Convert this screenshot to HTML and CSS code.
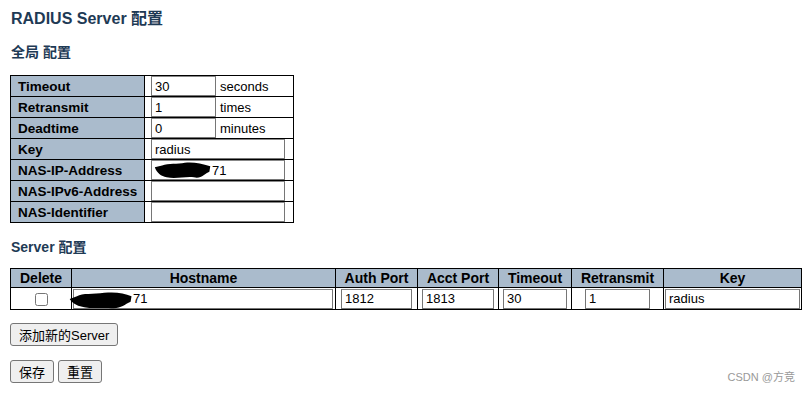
FILE: index.html
```html
<!DOCTYPE html>
<html>
<head>
  <link rel="stylesheet" href="styles.css">
</head>
<body>
  <h1 class="title">RADIUS Server 配置</h1>
  <h2 class="subtitle">全局 配置</h2>
  <table class="config global">
    <tr>
      <th class="label">Timeout</th>
      <td class="value"><input type="text" class="input short" value="30"><span class="unit">seconds</span></td>
    </tr>
    <tr>
      <th class="label">Retransmit</th>
      <td class="value"><input type="text" class="input short" value="1"><span class="unit">times</span></td>
    </tr>
    <tr>
      <th class="label">Deadtime</th>
      <td class="value"><input type="text" class="input short" value="0"><span class="unit">minutes</span></td>
    </tr>
    <tr>
      <th class="label">Key</th>
      <td class="value"><input type="text" class="input long" value="radius"></td>
    </tr>
    <tr>
      <th class="label">NAS-IP-Address</th>
      <td class="value">
        <span class="masked">
          <input type="text" class="input long ip" value="71">
          <svg class="blob blob-ip" viewBox="0 0 64 22"><path d="M1 8 L9 6 C16 3 26 5 34 3 C44 2 52 4 62 7 L61 13 C56 15 52 21 44 19 C34 18 24 21 14 19 C8 18 3 14 1 8 Z" fill="#000"/></svg>
        </span>
      </td>
    </tr>
    <tr>
      <th class="label">NAS-IPv6-Address</th>
      <td class="value"><input type="text" class="input long" value=""></td>
    </tr>
    <tr>
      <th class="label">NAS-Identifier</th>
      <td class="value"><input type="text" class="input long" value=""></td>
    </tr>
  </table>

  <h2 class="subtitle server-title">Server 配置</h2>
  <table class="config servers">
    <tr>
      <th class="col-delete">Delete</th>
      <th class="col-host">Hostname</th>
      <th class="col-auth">Auth Port</th>
      <th class="col-acct">Acct Port</th>
      <th class="col-timeout">Timeout</th>
      <th class="col-retrans">Retransmit</th>
      <th class="col-key">Key</th>
    </tr>
    <tr>
      <td class="cell-center"><input type="checkbox" class="check"></td>
      <td class="cell-left">
        <span class="masked">
          <input type="text" class="input host" value="71">
          <svg class="blob blob-host" viewBox="0 0 70 22"><path d="M0 10 L8 7 C14 3 26 5 38 3 C50 2 60 3 68 7 L67 13 C60 16 56 21 46 20 C36 19 26 21 16 19 C10 18 4 16 0 10 Z" fill="#000"/></svg>
        </span>
      </td>
      <td class="cell-center"><input type="text" class="input auth" value="1812"></td>
      <td class="cell-center"><input type="text" class="input acct" value="1813"></td>
      <td class="cell-center"><input type="text" class="input tmo" value="30"></td>
      <td class="cell-center"><input type="text" class="input retr" value="1"></td>
      <td class="cell-left"><input type="text" class="input skey" value="radius"></td>
    </tr>
  </table>

  <div class="actions">
    <button class="btn">添加新的Server</button>
  </div>
  <div class="actions save-row">
    <button class="btn">保存</button>
    <button class="btn">重置</button>
  </div>

  <div class="watermark">CSDN @方竞</div>
</body>
</html>
```

FILE: styles.css
```css
body {
  margin: 0;
  padding: 0 10px;
  font-family: 'Liberation Sans', Arial, 'Noto Sans CJK SC', sans-serif;
  font-size: 13px;
  color: #000;
  background-color: #fff;
  width: 811px;
  height: 393px;
  box-sizing: border-box;
  position: relative;
  overflow: hidden;
}
.title {
  font-size: 16px;
  font-weight: bold;
  line-height: 20px;
  margin: 9px 0 0 1px;
  color: #1e3a55;
}
.subtitle {
  font-size: 14px;
  font-weight: bold;
  line-height: 18px;
  margin: 14px 0 0 1px;
  color: #1e3a55;
}
.server-title {
  margin-top: 15px;
}
.config {
  border-collapse: collapse;
  border: 1px solid #000;
}
.config th, .config td {
  border: 1px solid #000;
  padding: 0;
}
.global {
  margin-top: 14px;
  width: 284px;
}
.global .label {
  width: 126px;
  height: 20px;
  background-color: #aabbcc;
  text-align: left;
  padding-left: 7px;
  font-weight: bold;
  font-size: 13.5px;
}
.global .value {
  height: 20px;
  padding-left: 6px;
  white-space: nowrap;
}
.input {
  font-family: 'Liberation Sans', Arial, sans-serif;
  font-size: 13px;
  height: 20px;
  box-sizing: border-box;
  border: 1px solid #767676;
  border-top-color: #888;
  padding: 0 3px;
  margin: 0;
  vertical-align: middle;
  background: #fff;
  color: #000;
}
.short {
  width: 65px;
}
.long {
  width: 134px;
}
.unit {
  padding-left: 4px;
  vertical-align: middle;
}
.masked {
  position: relative;
  display: inline-block;
  vertical-align: middle;
}
.masked .input {
  vertical-align: top;
}
.ip {
  padding-left: 60px;
}
.blob {
  position: absolute;
  top: 0;
  height: 20px;
}
.blob-ip {
  left: 1px;
  width: 62px;
}
.blob-host {
  left: -5px;
  top: 1px;
  width: 67px;
}
.server-title + .servers {
  margin-top: 12px;
}
.servers {
  width: 792px;
}
.servers th {
  background-color: #aabbcc;
  font-weight: bold;
  font-size: 14px;
  text-align: center;
  height: 18px;
  line-height: 16px;
}
.servers td {
  height: 21px;
}
.col-delete { width: 60px; }
.col-host { width: 263px; }
.col-auth { width: 81px; }
.col-acct { width: 80px; }
.col-timeout { width: 72px; }
.col-retrans { width: 91px; }
.cell-center {
  text-align: center;
}
.cell-left {
  text-align: left;
  padding-left: 1px !important;
}
.check {
  width: 13px;
  height: 13px;
  margin: 0;
  vertical-align: middle;
}
.host {
  width: 260px;
  padding-left: 59px;
}
.auth { width: 71px; }
.acct { width: 72px; }
.tmo { width: 64px; }
.retr { width: 65px; }
.skey { width: 135px; }
.actions {
  display: flex;
  gap: 4px;
  margin-top: 13px;
}
.save-row {
  margin-top: 14px;
}
.btn {
  font-family: 'Liberation Sans', Arial, 'Noto Sans CJK SC', sans-serif;
  font-size: 13px;
  height: 23px;
  padding: 0 8px;
  background-color: #efefef;
  border: 1px solid #767676;
  border-radius: 3px;
  color: #000;
}
.watermark {
  position: absolute;
  right: 16px;
  bottom: 9px;
  font-size: 11px;
  color: #999;
}
```
